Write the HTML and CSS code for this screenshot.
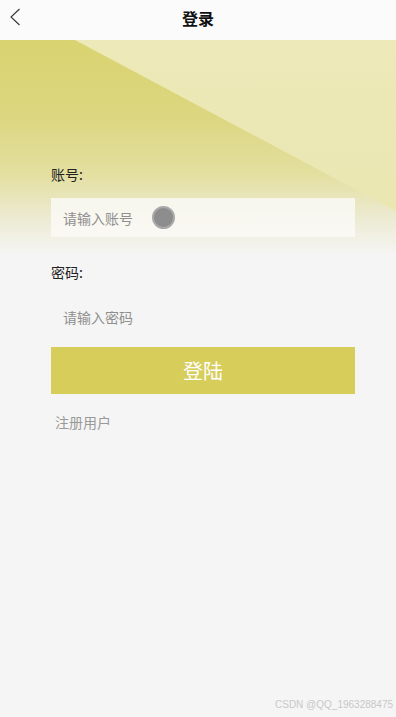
FILE: index.html
```html
<!DOCTYPE html>
<html lang="zh">
<head>
<meta charset="utf-8">
<title>登录</title>
<link rel="stylesheet" href="styles.css">
</head>
<body>
<div class="page">
  <header class="nav">
    <span class="back">
      <svg width="12" height="18" viewBox="0 0 12 18"><path d="M10.5 1 L2 9 L10.5 17" fill="none" stroke="#333" stroke-width="1.1"/></svg>
    </span>
    <h1 class="title">登录</h1>
  </header>
  <main class="content">
    <div class="bg"></div>
    <form class="form">
      <label class="label">账号:</label>
      <div class="field">
        <span class="placeholder">请输入账号</span>
        <span class="dot"></span>
      </div>
      <label class="label label-pwd">密码:</label>
      <div class="field field-pwd">
        <span class="placeholder">请输入密码</span>
      </div>
      <button type="button" class="btn">登陆</button>
      <a class="register">注册用户</a>
    </form>
    <div class="watermark">CSDN @QQ_1963288475</div>
  </main>
</div>
</body>
</html>
```
FILE: styles.css
```css
* { box-sizing: border-box; }
html, body { margin: 0; padding: 0; }
body {
  font-family: "Noto Sans CJK SC", "Noto Sans", sans-serif;
  background: #f5f5f5;
  width: 396px;
  height: 717px;
  overflow: hidden;
}
.page { display: flex; flex-direction: column; height: 717px; }
.nav {
  height: 40px;
  flex: none;
  background: #fbfbfb;
  display: flex;
  align-items: center;
  justify-content: center;
  padding-bottom: 4px;
  position: relative;
}
.back { position: absolute; left: 9px; top: 8px; display: flex; }
.title { margin: 0; font-size: 16px; font-weight: 700; color: #111; line-height: 1; }
.content {
  flex: 1;
  position: relative;
  display: flex;
  flex-direction: column;
}
.bg {
  position: absolute;
  left: 0; top: 0; right: 0;
  height: 215px;
  background: linear-gradient(to bottom, #d9d370 0%, #dcd680 35%, #e3df9f 62%, #ecead0 82%, #f5f5f5 100%);
}
.bg::after {
  content: "";
  position: absolute;
  left: 0; top: 0; right: 0; bottom: 0;
  background: linear-gradient(to bottom, #ede9b8 0%, #ebe7b3 70%, #e9e5b0 100%);
  clip-path: polygon(75px 0, 100% 0, 100% 171px);
}
.form {
  position: relative;
  display: flex;
  flex-direction: column;
  padding: 124px 41px 0 51px;
}
.label { font-size: 14px; color: #222; line-height: 20px; }
.field {
  margin-top: 14px;
  height: 39px;
  background: rgba(250, 249, 246, 0.85);
  display: flex;
  align-items: center;
  padding-left: 12px;
  gap: 19px;
}
.placeholder { font-size: 14px; color: #8f8f8f; }
.dot {
  width: 23px; height: 23px;
  border-radius: 50%;
  background: #8d8d8d;
  border: 2px solid #a9a9a9;
}
.label-pwd { margin-top: 25px; }
.field-pwd { margin-top: 15px; height: 40px; background: #f5f5f5; }
.btn {
  margin-top: 10px;
  height: 47px;
  border: none;
  background: #d6cd5b;
  color: #fff;
  font-family: inherit;
  font-size: 20px;
  padding: 0;
}
.register {
  margin-top: 18px;
  margin-left: 4px;
  font-size: 14px;
  line-height: 20px;
  color: #999;
}
.watermark {
  margin-top: auto;
  align-self: flex-end;
  margin-right: 3px;
  margin-bottom: 7px;
  font-family: "Liberation Sans", Arial, sans-serif;
  font-size: 10px;
  color: #c8c8c8;
}
```
